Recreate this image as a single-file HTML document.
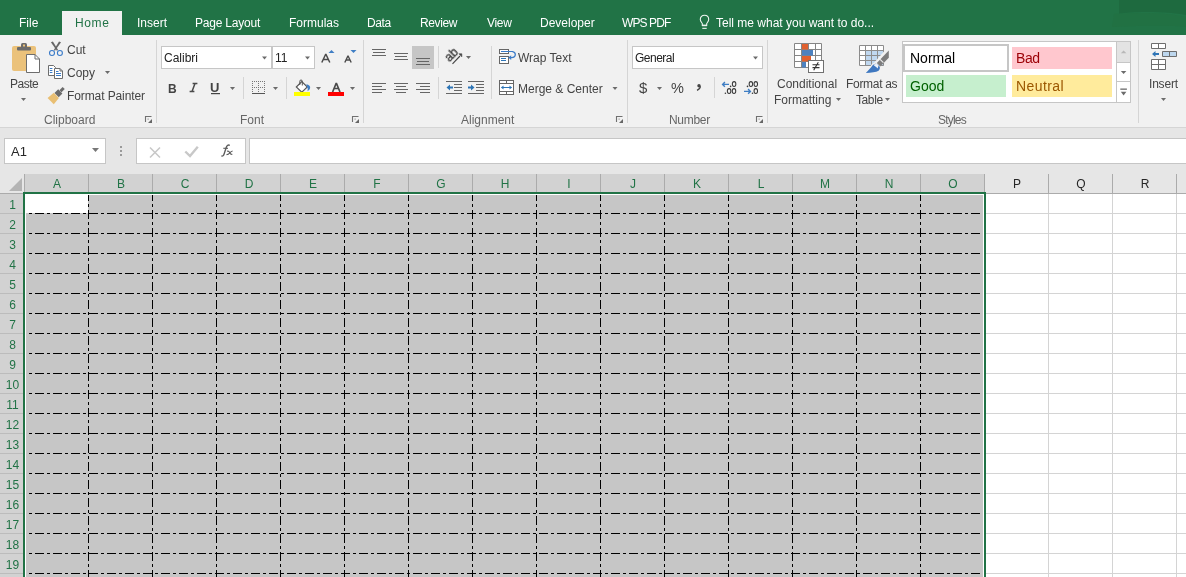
<!DOCTYPE html><html><head><meta charset="utf-8"><style>
*{margin:0;padding:0;box-sizing:border-box}
html,body{width:1186px;height:577px;overflow:hidden;background:#fff;font-family:"Liberation Sans", sans-serif}
.a{position:absolute}
.t,.tab,.gl,.hd,.rn,.z{z-index:2}
svg.top{z-index:1}
.t{position:absolute;font-size:12px;line-height:14px;white-space:nowrap;color:#444;will-change:transform}
.tab{position:absolute;font-size:12px;line-height:14px;white-space:nowrap;color:#fff;top:17px;will-change:transform}
.gl{position:absolute;font-size:12px;line-height:14px;white-space:nowrap;color:#666;top:113px;will-change:transform}
.sep{position:absolute;width:1px;background:#d5d5d5}
.hd{position:absolute;font-size:12px;line-height:14px;white-space:nowrap;top:177px;width:64px;text-align:center;will-change:transform}
.rn{position:absolute;font-size:12px;line-height:14px;white-space:nowrap;left:1px;width:23px;text-align:center;color:#217346;will-change:transform}
</style></head><body>
<div class="a" style="left:0;top:0;width:1186px;height:35px;background:#217346"></div>
<svg class="a" style="left:1100px;top:0" width="86" height="35"><path d="M19 0 L86 0 L86 15 C70 12 45 11 19 13.5 Z" fill="#1e6a3f"/><path d="M14 14 C40 12 70 13 86 17 L86 27 C70 25 40 26 12 27 Z" fill="#22703f" opacity="0.5"/></svg>
<div class="a" style="left:62px;top:11px;width:60px;height:24px;background:#f1f1f1"></div>
<div class="tab" style="left:19px;top:16px;">File</div>
<div class="tab" style="left:137px;top:16px;letter-spacing:0px">Insert</div>
<div class="tab" style="left:195px;top:16px;letter-spacing:-0.2px">Page Layout</div>
<div class="tab" style="left:289px;top:16px;">Formulas</div>
<div class="tab" style="left:367px;top:16px;letter-spacing:-0.4px">Data</div>
<div class="tab" style="left:420px;top:16px;letter-spacing:-0.4px">Review</div>
<div class="tab" style="left:487px;top:16px;letter-spacing:-0.3px">View</div>
<div class="tab" style="left:540px;top:16px;">Developer</div>
<div class="tab" style="left:622px;top:16px;letter-spacing:-0.9px">WPS PDF</div>
<div class="tab" style="left:75px;top:16px;color:#217346;letter-spacing:0.6px">Home</div>
<svg class="a" style="left:697px;top:14px" width="16" height="17"><path d="M7.5 1.2 C5 1.2 3.3 3.1 3.3 5.4 C3.3 7.2 4.5 8.3 5.3 9.5 V11.5 H9.7 V9.5 C10.5 8.3 11.7 7.2 11.7 5.4 C11.7 3.1 10 1.2 7.5 1.2 Z" fill="none" stroke="#eef4f0" stroke-width="1.1"/><rect x="5" y="10.6" width="5" height="1.6" fill="#eef4f0"/><rect x="5.3" y="13.8" width="4.4" height="1.1" fill="#eef4f0"/></svg>
<div class="tab" style="left:716px;top:16px;">Tell me what you want to do...</div>
<div class="a" style="left:0;top:35px;width:1186px;height:92px;background:#f1f1f1"></div>
<div class="a" style="left:0;top:127px;width:1186px;height:1px;background:#d5d5d5"></div>
<div class="sep" style="left:156px;top:40px;height:83px"></div>
<div class="sep" style="left:363px;top:40px;height:83px"></div>
<div class="sep" style="left:627px;top:40px;height:83px"></div>
<div class="sep" style="left:767px;top:40px;height:83px"></div>
<div class="sep" style="left:1138px;top:40px;height:83px"></div>
<div class="gl" style="left:44px;top:113px;">Clipboard</div>
<div class="gl" style="left:240px;top:113px;">Font</div>
<div class="gl" style="left:461px;top:113px;">Alignment</div>
<div class="gl" style="left:669px;top:113px;letter-spacing:-0.3px">Number</div>
<div class="gl" style="left:938px;top:113px;letter-spacing:-0.8px">Styles</div>
<div class="t" style="left:10px;top:77px;letter-spacing:-0.5px">Paste</div>
<div class="t" style="left:67px;top:43px;">Cut</div>
<div class="t" style="left:67px;top:66px;">Copy</div>
<div class="t" style="left:67px;top:89px;letter-spacing:-0.1px">Format Painter</div>
<div class="a" style="left:161px;top:46px;width:111px;height:23px;background:#fff;border:1px solid #c6c6c6"></div>
<div class="a" style="left:272px;top:46px;width:43px;height:23px;background:#fff;border:1px solid #c6c6c6"></div>
<div class="t" style="left:164px;top:51px;color:#222">Calibri</div>
<div class="t" style="left:275px;top:51px;color:#222">11</div>
<div class="t" style="left:167.5px;top:82px;font-weight:bold;font-size:12px;color:#444">B</div>
<div class="t" style="left:210px;top:81px;font-weight:bold;font-size:13px;color:#444">U</div>
<div class="a z" style="left:445.5px;top:47.5px;font-size:12px;line-height:12px;color:#333;-webkit-text-stroke:0.3px #333;transform:rotate(-45deg);transform-origin:7px 8px;will-change:transform">ab</div>
<div class="t" style="left:518px;top:51px;">Wrap Text</div>
<div class="t" style="left:518px;top:82px;">Merge &amp; Center</div>
<div class="a" style="left:632px;top:46px;width:131px;height:23px;background:#fff;border:1px solid #c6c6c6"></div>
<div class="t" style="left:635px;top:51px;color:#222;letter-spacing:-0.5px">General</div>
<div class="t" style="left:639px;top:79px;font-size:15px;line-height:17px;color:#444">$</div>
<div class="t" style="left:671px;top:80px;font-size:14.5px;line-height:16px;color:#444">%</div>
<div class="t" style="left:777px;top:77px;">Conditional</div>
<div class="t" style="left:774px;top:93px;">Formatting</div>
<div class="t" style="left:846px;top:77px;letter-spacing:-0.3px">Format as</div>
<div class="t" style="left:856px;top:93px;letter-spacing:-0.4px">Table</div>
<div class="a" style="left:902px;top:41px;width:229px;height:62px;background:#fff;border:1px solid #c6c6c6"></div>
<div class="a" style="left:903px;top:44px;width:106px;height:28px;background:#fff;border:2px solid #c6c6c6"></div>
<div class="a" style="left:1012px;top:47px;width:100px;height:22px;background:#ffc7ce"></div>
<div class="a" style="left:906px;top:75px;width:100px;height:22px;background:#c6efce"></div>
<div class="a" style="left:1012px;top:75px;width:100px;height:22px;background:#ffeb9c"></div>
<div class="t" style="left:910px;top:50px;font-size:14px;line-height:16px;color:#000">Normal</div>
<div class="t" style="left:1016px;top:50px;font-size:14px;line-height:16px;color:#9c0006;letter-spacing:-0.4px">Bad</div>
<div class="t" style="left:910px;top:78px;font-size:14px;line-height:16px;color:#006100">Good</div>
<div class="t" style="left:1016px;top:78px;font-size:14px;line-height:16px;color:#9c5700;letter-spacing:0.4px">Neutral</div>
<div class="a" style="left:1116px;top:41px;width:15px;height:62px;background:#fff;border:1px solid #c6c6c6"></div>
<div class="a" style="left:1116px;top:41px;width:15px;height:22px;background:#e3e3e3;border:1px solid #c6c6c6"></div>
<div class="a" style="left:1116px;top:81px;width:15px;height:1px;background:#c6c6c6"></div>
<div class="t" style="left:1149px;top:77px;letter-spacing:-0.2px">Insert</div>
<div class="a" style="left:0;top:128px;width:1186px;height:449px;background:#e6e6e6"></div>
<div class="a" style="left:4px;top:138px;width:102px;height:26px;background:#fff;border:1px solid #c6c6c6"></div>
<div class="t" style="left:11px;top:145px;font-size:13px;color:#262626">A1</div>
<div class="a" style="left:136px;top:138px;width:110px;height:26px;background:#fff;border:1px solid #c6c6c6"></div>
<div class="a" style="left:249px;top:138px;width:937px;height:26px;background:#fff;border:1px solid #c6c6c6;border-right:none"></div>
<div class="hd" style="left:25px;color:#217346">A</div>
<div class="hd" style="left:89px;color:#217346">B</div>
<div class="hd" style="left:153px;color:#217346">C</div>
<div class="hd" style="left:217px;color:#217346">D</div>
<div class="hd" style="left:281px;color:#217346">E</div>
<div class="hd" style="left:345px;color:#217346">F</div>
<div class="hd" style="left:409px;color:#217346">G</div>
<div class="hd" style="left:473px;color:#217346">H</div>
<div class="hd" style="left:537px;color:#217346">I</div>
<div class="hd" style="left:601px;color:#217346">J</div>
<div class="hd" style="left:665px;color:#217346">K</div>
<div class="hd" style="left:729px;color:#217346">L</div>
<div class="hd" style="left:793px;color:#217346">M</div>
<div class="hd" style="left:857px;color:#217346">N</div>
<div class="hd" style="left:921px;color:#217346">O</div>
<div class="hd" style="left:985px;color:#262626">P</div>
<div class="hd" style="left:1049px;color:#262626">Q</div>
<div class="hd" style="left:1113px;color:#262626">R</div>
<div class="rn" style="top:198px">1</div>
<div class="rn" style="top:218px">2</div>
<div class="rn" style="top:238px">3</div>
<div class="rn" style="top:258px">4</div>
<div class="rn" style="top:278px">5</div>
<div class="rn" style="top:298px">6</div>
<div class="rn" style="top:318px">7</div>
<div class="rn" style="top:338px">8</div>
<div class="rn" style="top:358px">9</div>
<div class="rn" style="top:378px">10</div>
<div class="rn" style="top:398px">11</div>
<div class="rn" style="top:418px">12</div>
<div class="rn" style="top:438px">13</div>
<div class="rn" style="top:458px">14</div>
<div class="rn" style="top:478px">15</div>
<div class="rn" style="top:498px">16</div>
<div class="rn" style="top:518px">17</div>
<div class="rn" style="top:538px">18</div>
<div class="rn" style="top:558px">19</div>
<svg class="a top" style="left:0;top:0" width="1186" height="577"><path d="M145.5 122 V116.5 H151.5" fill="none" stroke="#707070" stroke-width="1.1"/><path d="M148 123 H152 V119 Z" fill="#666"/><rect x="147.6" y="118.6" width="1" height="1" fill="#777"/><path d="M352.5 122 V116.5 H358.5" fill="none" stroke="#707070" stroke-width="1.1"/><path d="M355 123 H359 V119 Z" fill="#666"/><rect x="354.6" y="118.6" width="1" height="1" fill="#777"/><path d="M616.5 122 V116.5 H622.5" fill="none" stroke="#707070" stroke-width="1.1"/><path d="M619 123 H623 V119 Z" fill="#666"/><rect x="618.6" y="118.6" width="1" height="1" fill="#777"/><path d="M756.5 122 V116.5 H762.5" fill="none" stroke="#707070" stroke-width="1.1"/><path d="M759 123 H763 V119 Z" fill="#666"/><rect x="758.6" y="118.6" width="1" height="1" fill="#777"/><rect x="12" y="46" width="24" height="25" rx="2" fill="#ebc27b"/><rect x="17" y="47" width="14" height="3.5" rx="1" fill="#6b6b6b"/><rect x="21" y="43" width="6" height="5" rx="1.5" fill="#6b6b6b"/><rect x="23" y="44.5" width="2" height="2" fill="#ebc27b"/><path d="M26.5 54.5 H35 L39.5 59 V72.5 H26.5 Z" fill="#fff" stroke="#6d6d6d" stroke-width="1"/><path d="M35 54.5 V59 H39.5" fill="none" stroke="#6d6d6d" stroke-width="1"/><path d="M21.0 98 L26.0 98 L23.5 101.0 Z" fill="#6b6b6b"/><path d="M50.9 42.2 L52.9 41.4 L58.1 50 L56.9 50.8 Z" fill="#666"/><path d="M61 42.2 L59 41.4 L53.8 50 L55 50.8 Z" fill="#666"/><circle cx="52" cy="53" r="2.5" fill="none" stroke="#3a7bc8" stroke-width="1.1"/><circle cx="59.9" cy="53" r="2.5" fill="none" stroke="#3a7bc8" stroke-width="1.1"/><path d="M48.5 65.5 H53.5 L55.5 67.5 V75.5 H48.5 Z" fill="#fff" stroke="#6d6d6d"/><path d="M49.8 68.5 h2.6 M49.8 70.5 h2.6 M49.8 72.5 h2.6" stroke="#3a7bc8"/><path d="M54.5 68.5 H60 L62.5 71 V78.5 H54.5 Z" fill="#fff" stroke="#6d6d6d"/><path d="M60 68.5 V71 H62.5" fill="none" stroke="#6d6d6d"/><path d="M56 71.5 h2.5 M56 73.5 h5 M56 75.5 h5" stroke="#3a7bc8"/><path d="M105.0 71 L110.0 71 L107.5 74.0 Z" fill="#6b6b6b"/><g transform="translate(55.9 95.8) rotate(45)"><rect x="-1.5" y="-11" width="3" height="4.5" fill="#6b6b6b"/><rect x="-3" y="-6.2" width="6" height="5.2" fill="#6b6b6b"/><path d="M-3.6 -0.6 H3.6 L4.4 7.4 H-4.4 Z" fill="#e9bf73"/></g><path d="M262.0 56.5 L267.0 56.5 L264.5 59.5 Z" fill="#6b6b6b"/><path d="M305.0 56.5 L310.0 56.5 L307.5 59.5 Z" fill="#6b6b6b"/><path d="M321.8 62.5 L325.8 54 L329.8 62.5 M323.4 59.4 H328.2" fill="none" stroke="#4a4a4a" stroke-width="1.5" stroke-linejoin="bevel"/><path d="M328.5 53 L331.5 50 L334.5 53 Z" fill="#3f7ec4"/><path d="M344.8 62.5 L348 55.8 L351.2 62.5 M346.1 60 H349.9" fill="none" stroke="#4a4a4a" stroke-width="1.4" stroke-linejoin="bevel"/><path d="M350.5 50 L356.5 50 L353.5 53 Z" fill="#3f7ec4"/><path d="M192.6 83.6 H197.4 M189.6 91.4 H194.4 M195 83.6 L192 91.4" fill="none" stroke="#4a4a4a" stroke-width="1.5"/><rect x="211" y="93" width="9" height="1.2" fill="#444"/><path d="M230.0 87 L235.0 87 L232.5 90.0 Z" fill="#6b6b6b"/><rect x="243" y="77" width="1" height="22" fill="#d5d5d5"/><path d="M252.5 81 V93 M258.5 81 V93 M264.5 81 V93 M252 81.5 H265 M252 87.5 H265" stroke="#777" stroke-width="1" stroke-dasharray="1 1"/><rect x="252" y="93" width="13" height="1" fill="#555"/><path d="M273.0 87 L278.0 87 L275.5 90.0 Z" fill="#6b6b6b"/><rect x="286" y="77" width="1" height="22" fill="#d5d5d5"/><path d="M296.3 87 L301.8 81.5 L307.3 87 L301.8 92.2 Z" fill="#fff" stroke="#555" stroke-width="1.1"/><path d="M299.8 85 V81.3 Q299.8 80 301 80 Q302.3 80 302.3 81.3 V85.5" fill="none" stroke="#555" stroke-width="1"/><path d="M306.3 84.2 C309 84.3 310.8 86.5 310 88.5 C309.5 89.8 308.5 90.6 307.5 91.2 C307.8 89.5 308 87.8 307 87 Z" fill="#3f7ec4"/><rect x="294" y="92" width="16" height="4" fill="#ffff00"/><path d="M316.0 87 L321.0 87 L318.5 90.0 Z" fill="#6b6b6b"/><path d="M332.6 92 L336.3 83 L340 92 M334 88.5 H338.6" fill="none" stroke="#4a4a4a" stroke-width="1.7" stroke-linejoin="bevel"/><rect x="328" y="92" width="16" height="4" fill="#ff0000"/><path d="M350.0 87 L355.0 87 L352.5 90.0 Z" fill="#6b6b6b"/><rect x="372" y="49" width="14" height="1" fill="#666"/><rect x="373" y="52" width="12" height="1" fill="#666"/><rect x="372" y="55" width="14" height="1" fill="#666"/><rect x="394" y="53" width="14" height="1" fill="#666"/><rect x="395" y="56" width="12" height="1" fill="#666"/><rect x="394" y="59" width="14" height="1" fill="#666"/><rect x="412" y="46" width="22" height="23" fill="#c6c6c6"/><rect x="416" y="58" width="14" height="1" fill="#666"/><rect x="417" y="61" width="12" height="1" fill="#666"/><rect x="416" y="64" width="14" height="1" fill="#666"/><rect x="438" y="46" width="1" height="22" fill="#d5d5d5"/><path d="M452.5 63.8 L460 56" fill="none" stroke="#444" stroke-width="1.1"/><path d="M459 53.8 L461.8 53.8 L461.8 56.8 Z" fill="#444" stroke="#444" stroke-width="0.6"/><path d="M466.0 56 L471.0 56 L468.5 59.0 Z" fill="#6b6b6b"/><rect x="491" y="46" width="1" height="53" fill="#d5d5d5"/><rect x="372" y="83" width="14" height="1" fill="#666"/><rect x="372" y="86" width="10" height="1" fill="#666"/><rect x="372" y="89" width="14" height="1" fill="#666"/><rect x="372" y="92" width="10" height="1" fill="#666"/><rect x="394" y="83" width="14" height="1" fill="#666"/><rect x="396" y="86" width="10" height="1" fill="#666"/><rect x="394" y="89" width="14" height="1" fill="#666"/><rect x="396" y="92" width="10" height="1" fill="#666"/><rect x="416" y="83" width="14" height="1" fill="#666"/><rect x="420" y="86" width="10" height="1" fill="#666"/><rect x="416" y="89" width="14" height="1" fill="#666"/><rect x="420" y="92" width="10" height="1" fill="#666"/><rect x="438" y="77" width="1" height="22" fill="#d5d5d5"/><rect x="446" y="81" width="16" height="1" fill="#666"/><rect x="454" y="84" width="8" height="1" fill="#666"/><rect x="454" y="87" width="8" height="1" fill="#666"/><rect x="454" y="90" width="8" height="1" fill="#666"/><rect x="446" y="93" width="16" height="1" fill="#666"/><path d="M446.5 87.5 L450 84.5 V86.5 H453 V88.5 H450 V90.5 Z" fill="#2e75b6"/><rect x="468" y="81" width="16" height="1" fill="#666"/><rect x="476" y="84" width="8" height="1" fill="#666"/><rect x="476" y="87" width="8" height="1" fill="#666"/><rect x="476" y="90" width="8" height="1" fill="#666"/><rect x="468" y="93" width="16" height="1" fill="#666"/><path d="M474.5 87.5 L471 84.5 V86.5 H468 V88.5 H471 V90.5 Z" fill="#2e75b6"/><rect x="499.5" y="49.5" width="9" height="4" fill="#fff" stroke="#666"/><path d="M501 51.5 H513" stroke="#3a7bc8"/><rect x="499.5" y="56.5" width="9" height="7" fill="#fff" stroke="#666"/><path d="M501 58.5 H506 M501 60.5 H506" stroke="#2e75b6"/><path d="M512.5 51.6 Q515.3 52 515.3 54.6 Q515.3 57.6 511.5 57.6 H510.5" fill="none" stroke="#3a7bc8" stroke-width="1.3"/><path d="M508.3 57.6 L511.2 55.2 V60 Z" fill="#3a7bc8"/><rect x="499.5" y="80.5" width="14" height="14" fill="#fff" stroke="#666"/><path d="M499.5 83.5 H513.5 M499.5 91.5 H513.5 M506.5 80.5 V83.5 M506.5 91.5 V94.5" stroke="#666"/><path d="M501.5 87.5 H511.5" stroke="#2e75b6"/><path d="M501 87.5 l2.5 -2 v4 z M512 87.5 l-2.5 -2 v4 z" fill="#2e75b6"/><path d="M612.5 87 L617.5 87 L615 90.0 Z" fill="#6b6b6b"/><path d="M753.0 56.5 L758.0 56.5 L755.5 59.5 Z" fill="#6b6b6b"/><path d="M657.0 87 L662.0 87 L659.5 90.0 Z" fill="#6b6b6b"/><circle cx="699" cy="85.8" r="1.7" fill="#444"/><path d="M700.4 86.2 Q700.2 89 697 90.4" fill="none" stroke="#444" stroke-width="1.3"/><rect x="714" y="77" width="1" height="21" fill="#d5d5d5"/><circle cx="730.6" cy="86.4" r="0.8" fill="#3a3a3a"/><ellipse cx="734.1" cy="84.0" rx="1.75" ry="2.4" fill="none" stroke="#3a3a3a" stroke-width="1.05"/><circle cx="725.4" cy="93.3" r="0.8" fill="#3a3a3a"/><ellipse cx="729.1" cy="91.0" rx="1.75" ry="2.4" fill="none" stroke="#3a3a3a" stroke-width="1.05"/><ellipse cx="734.0" cy="91.0" rx="1.75" ry="2.4" fill="none" stroke="#3a3a3a" stroke-width="1.05"/><path d="M722.6 84.4 H729 M724.9 82.1 L722.6 84.4 L724.9 86.7" fill="none" stroke="#3f7ec4" stroke-width="1.4"/><circle cx="747.5" cy="86.4" r="0.8" fill="#3a3a3a"/><ellipse cx="750.9" cy="84.0" rx="1.75" ry="2.4" fill="none" stroke="#3a3a3a" stroke-width="1.05"/><ellipse cx="755.8" cy="84.0" rx="1.75" ry="2.4" fill="none" stroke="#3a3a3a" stroke-width="1.05"/><circle cx="752.5" cy="93.3" r="0.8" fill="#3a3a3a"/><ellipse cx="755.8" cy="91.0" rx="1.75" ry="2.4" fill="none" stroke="#3a3a3a" stroke-width="1.05"/><path d="M744 91.4 H750.4 M748.1 89.1 L750.4 91.4 L748.1 93.7" fill="none" stroke="#3f7ec4" stroke-width="1.4"/><rect x="794" y="43" width="28" height="25" fill="#fff"/><path d="M794.5 43.5 H821.5 V67.5 H794.5 Z M801.5 43.5 V67.5 M808.5 43.5 V67.5 M815.5 43.5 V67.5 M794.5 49.5 H821.5 M794.5 55.5 H821.5 M794.5 61.5 H821.5" fill="none" stroke="#858585" stroke-width="1"/><rect x="802" y="44" width="6" height="5.5" fill="#e0602f"/><rect x="802" y="50" width="11" height="5.5" fill="#4d81bf"/><rect x="802" y="56" width="9" height="5.5" fill="#e0602f"/><rect x="802" y="62" width="4" height="5.5" fill="#4d81bf"/><rect x="808.5" y="60.5" width="15" height="12" fill="#fff" stroke="#707070"/><path d="M812.5 64.8 H819.5 M812.5 67.6 H819.5 M818.3 62.3 L813.7 70.2" stroke="#333" stroke-width="1.1"/><path d="M836.0 98 L841.0 98 L838.5 101.0 Z" fill="#6b6b6b"/><rect x="859" y="45" width="25" height="21" fill="#fff"/><rect x="865" y="50" width="19" height="16" fill="#c0d8f0"/><path d="M859.5 45.5 H883.5 V65.5 H859.5 Z M865.5 45.5 V65.5 M871.5 45.5 V65.5 M877.5 45.5 V65.5 M859.5 50.5 H883.5 M859.5 55.5 H883.5 M859.5 60.5 H883.5" fill="none" stroke="#8c8c8c" stroke-width="1"/><path d="M889 51 L874.5 67.5" stroke="#f1f1f1" stroke-width="7"/><circle cx="875.6" cy="67.6" r="5.2" fill="#f1f1f1"/><path d="M888.8 50.6 V57.8 L880.2 66.4 L876.8 63 Z" fill="#7d7d7d"/><path d="M880.1 59.3 L883.4 62.6" stroke="#f1f1f1" stroke-width="1.1"/><path d="M865.8 72.9 C868.5 70.5 870.8 67.8 872.6 65.3 A3.9 3.9 0 1 1 878.6 70.8 C876 72.3 871.5 72.9 865.8 72.9 Z" fill="#3f78c0"/><path d="M873.6 65 C875 63.6 877.4 63.8 878.6 65.4 L877.6 68.4 C876.6 67 875 66.4 873.6 65 Z" fill="#fff" opacity="0.9"/><path d="M885.0 98 L890.0 98 L887.5 101.0 Z" fill="#6b6b6b"/><path d="M1120.8 53.2 L1126.4 53.2 L1123.6 50.4 Z" fill="#b8b8b8"/><path d="M1120.8 71 L1126.4 71 L1123.6 74 Z" fill="#6b6b6b"/><rect x="1120.3" y="88.5" width="6.6" height="1.3" fill="#6b6b6b"/><path d="M1120.8 91.8 L1126.4 91.8 L1123.6 95.6 Z" fill="#6b6b6b"/><path d="M1151.5 43.5 H1165.5 V48.5 H1151.5 Z M1158.5 43.5 V48.5" fill="#fff" stroke="#6d6d6d"/><path d="M1162.5 51.5 H1176.5 V56.5 H1162.5 Z" fill="#bdd7ee" stroke="#6d6d6d"/><path d="M1169.5 51.5 V56.5" stroke="#6d6d6d"/><path d="M1152 54 L1155.5 51 V53 H1159 V55 H1155.5 V57 Z" fill="#2e75b6"/><path d="M1151.5 59.5 H1165.5 V69.5 H1151.5 Z M1158.5 59.5 V69.5 M1151.5 64.5 H1165.5" fill="#fff" stroke="#6d6d6d"/><path d="M1161.0 98 L1166.0 98 L1163.5 101.0 Z" fill="#6b6b6b"/><path d="M92.0 148 L99.0 148 L95.5 152.0 Z" fill="#777"/><rect x="120" y="146" width="2" height="2" fill="#9a9a9a"/><rect x="120" y="150" width="2" height="2" fill="#9a9a9a"/><rect x="120" y="154" width="2" height="2" fill="#9a9a9a"/><path d="M150 147.5 L160 157.5 M160 147.5 L150 157.5" stroke="#c8c8c8" stroke-width="1.6"/><path d="M185.3 151.5 L190 156 L197.8 146.8" fill="none" stroke="#c8c8c8" stroke-width="2.4"/><path d="M221.3 155.8 C222.6 156.6 223.6 155.6 224.1 154 L226.3 147.2 C226.9 145.4 228 144.6 229.8 145.3" fill="none" stroke="#5a5a5a" stroke-width="1.35"/><path d="M223.3 148.3 H228" stroke="#5a5a5a" stroke-width="1.1"/><path d="M227 151.3 Q228.9 150.6 229.7 152.6 Q230.5 154.6 232.3 154.4 M232.6 151 Q231.2 151.2 229.8 152.9 Q228.4 154.6 226.5 154.6" fill="none" stroke="#5a5a5a" stroke-width="1.1"/><rect x="25" y="174" width="959" height="19" fill="#d2d2d2"/><rect x="985" y="174" width="201" height="19" fill="#e6e6e6"/><polygon points="9,191 22,191 22,178" fill="#b4b4b4"/><rect x="24" y="174" width="1" height="19" fill="#ababab"/><rect x="88" y="174" width="1" height="19" fill="#ababab"/><rect x="152" y="174" width="1" height="19" fill="#ababab"/><rect x="216" y="174" width="1" height="19" fill="#ababab"/><rect x="280" y="174" width="1" height="19" fill="#ababab"/><rect x="344" y="174" width="1" height="19" fill="#ababab"/><rect x="408" y="174" width="1" height="19" fill="#ababab"/><rect x="472" y="174" width="1" height="19" fill="#ababab"/><rect x="536" y="174" width="1" height="19" fill="#ababab"/><rect x="600" y="174" width="1" height="19" fill="#ababab"/><rect x="664" y="174" width="1" height="19" fill="#ababab"/><rect x="728" y="174" width="1" height="19" fill="#ababab"/><rect x="792" y="174" width="1" height="19" fill="#ababab"/><rect x="856" y="174" width="1" height="19" fill="#ababab"/><rect x="920" y="174" width="1" height="19" fill="#ababab"/><rect x="984" y="174" width="1" height="19" fill="#ababab"/><rect x="1048" y="174" width="1" height="19" fill="#ababab"/><rect x="1112" y="174" width="1" height="19" fill="#ababab"/><rect x="1176" y="174" width="1" height="19" fill="#ababab"/><rect x="0" y="193" width="1186" height="1" fill="#ababab"/><rect x="0" y="194" width="23" height="383" fill="#d2d2d2"/><rect x="0" y="213" width="23" height="1" fill="#bcbcbc"/><rect x="0" y="233" width="23" height="1" fill="#bcbcbc"/><rect x="0" y="253" width="23" height="1" fill="#bcbcbc"/><rect x="0" y="273" width="23" height="1" fill="#bcbcbc"/><rect x="0" y="293" width="23" height="1" fill="#bcbcbc"/><rect x="0" y="313" width="23" height="1" fill="#bcbcbc"/><rect x="0" y="333" width="23" height="1" fill="#bcbcbc"/><rect x="0" y="353" width="23" height="1" fill="#bcbcbc"/><rect x="0" y="373" width="23" height="1" fill="#bcbcbc"/><rect x="0" y="393" width="23" height="1" fill="#bcbcbc"/><rect x="0" y="413" width="23" height="1" fill="#bcbcbc"/><rect x="0" y="433" width="23" height="1" fill="#bcbcbc"/><rect x="0" y="453" width="23" height="1" fill="#bcbcbc"/><rect x="0" y="473" width="23" height="1" fill="#bcbcbc"/><rect x="0" y="493" width="23" height="1" fill="#bcbcbc"/><rect x="0" y="513" width="23" height="1" fill="#bcbcbc"/><rect x="0" y="533" width="23" height="1" fill="#bcbcbc"/><rect x="0" y="553" width="23" height="1" fill="#bcbcbc"/><rect x="0" y="573" width="23" height="1" fill="#bcbcbc"/><rect x="25" y="194" width="1161" height="383" fill="#fff"/><rect x="986" y="213" width="200" height="1" fill="#d4d4d4"/><rect x="986" y="233" width="200" height="1" fill="#d4d4d4"/><rect x="986" y="253" width="200" height="1" fill="#d4d4d4"/><rect x="986" y="273" width="200" height="1" fill="#d4d4d4"/><rect x="986" y="293" width="200" height="1" fill="#d4d4d4"/><rect x="986" y="313" width="200" height="1" fill="#d4d4d4"/><rect x="986" y="333" width="200" height="1" fill="#d4d4d4"/><rect x="986" y="353" width="200" height="1" fill="#d4d4d4"/><rect x="986" y="373" width="200" height="1" fill="#d4d4d4"/><rect x="986" y="393" width="200" height="1" fill="#d4d4d4"/><rect x="986" y="413" width="200" height="1" fill="#d4d4d4"/><rect x="986" y="433" width="200" height="1" fill="#d4d4d4"/><rect x="986" y="453" width="200" height="1" fill="#d4d4d4"/><rect x="986" y="473" width="200" height="1" fill="#d4d4d4"/><rect x="986" y="493" width="200" height="1" fill="#d4d4d4"/><rect x="986" y="513" width="200" height="1" fill="#d4d4d4"/><rect x="986" y="533" width="200" height="1" fill="#d4d4d4"/><rect x="986" y="553" width="200" height="1" fill="#d4d4d4"/><rect x="986" y="573" width="200" height="1" fill="#d4d4d4"/><rect x="1048" y="194" width="1" height="383" fill="#d4d4d4"/><rect x="1112" y="194" width="1" height="383" fill="#d4d4d4"/><rect x="1176" y="194" width="1" height="383" fill="#d4d4d4"/><rect x="26" y="195" width="957" height="382" fill="#c6c6c6"/><rect x="26" y="195" width="62" height="18" fill="#fff"/><path d="M26 213.5 H983 M26 233.5 H983 M26 253.5 H983 M26 273.5 H983 M26 293.5 H983 M26 313.5 H983 M26 333.5 H983 M26 353.5 H983 M26 373.5 H983 M26 393.5 H983 M26 413.5 H983 M26 433.5 H983 M26 453.5 H983 M26 473.5 H983 M26 493.5 H983 M26 513.5 H983 M26 533.5 H983 M26 553.5 H983 M26 573.5 H983" stroke="#000" stroke-width="1" stroke-dasharray="9 3 3 3" stroke-dashoffset="9" fill="none"/><path d="M88.5 195 V577 M152.5 195 V577 M216.5 195 V577 M280.5 195 V577 M344.5 195 V577 M408.5 195 V577 M472.5 195 V577 M536.5 195 V577 M600.5 195 V577 M664.5 195 V577 M728.5 195 V577 M792.5 195 V577 M856.5 195 V577 M920.5 195 V577" stroke="#000" stroke-width="1" stroke-dasharray="9 3 3 3" stroke-dashoffset="3" fill="none"/><rect x="24" y="193" width="961" height="500" fill="none" stroke="#217346" stroke-width="2"/></svg>
</body></html>
